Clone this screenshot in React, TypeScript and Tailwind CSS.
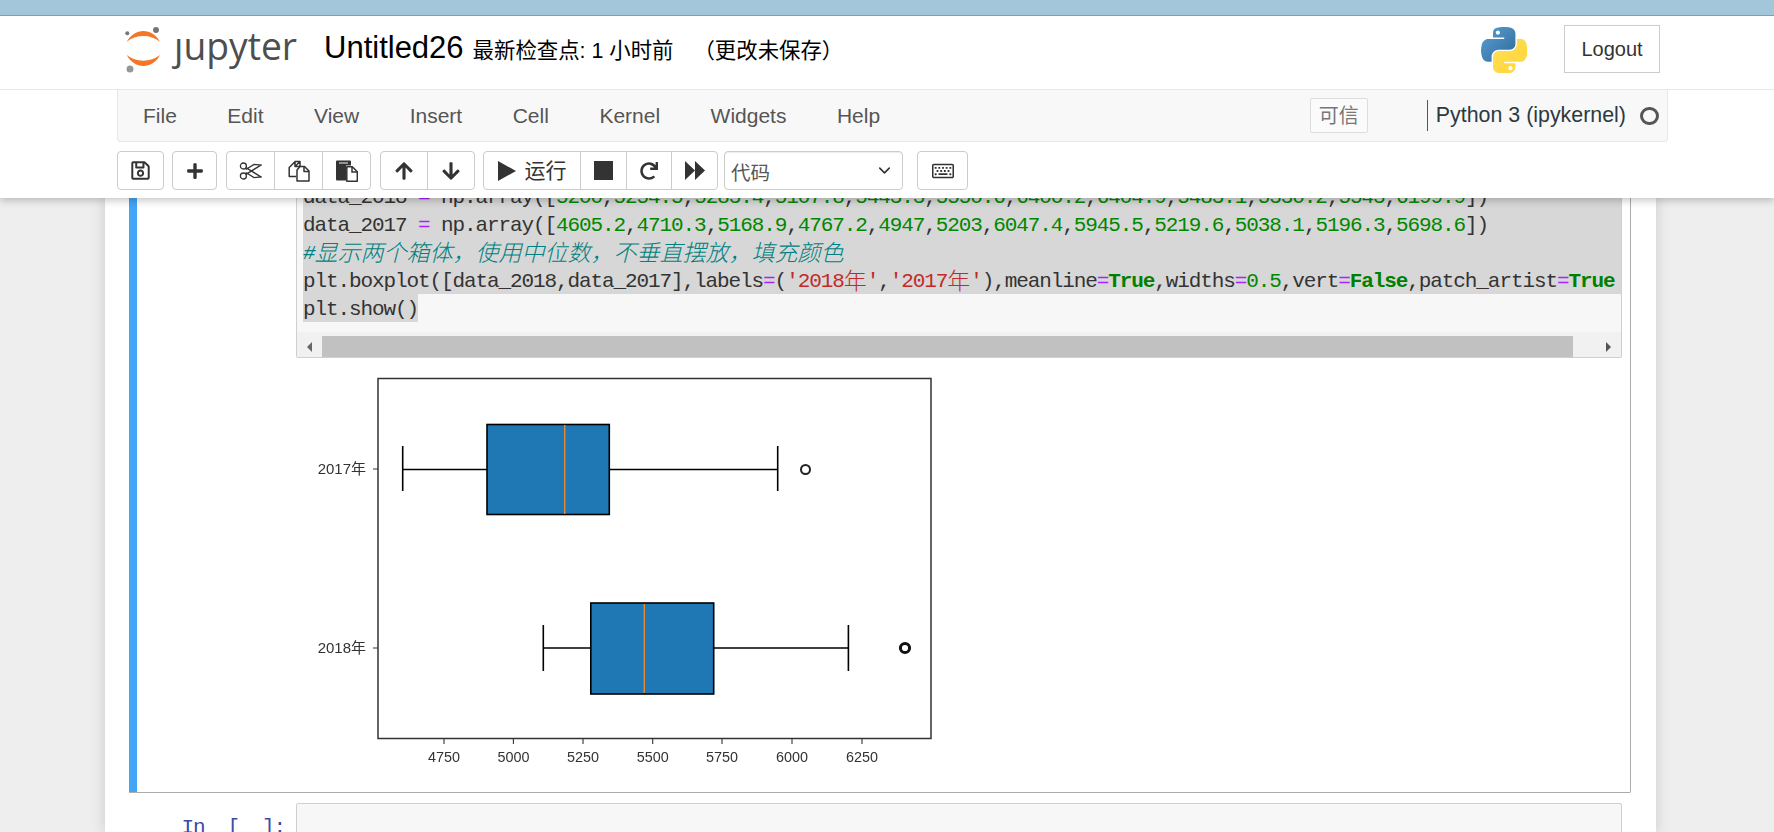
import React from "react";
import { FaRegSave, FaPlus, FaArrowUp, FaArrowDown, FaRedo, FaRegKeyboard } from "react-icons/fa";
import { LuChevronDown } from "react-icons/lu";

const Cjk = ({ children }: { children: React.ReactNode }) => (
  <span className="[font-family:'Noto_Sans_CJK_SC',sans-serif] text-[23px] leading-[0] align-[-2px] tracking-normal font-light">{children}</span>
);
const N = ({ children }: { children: React.ReactNode }) => <span className="text-[#008800]">{children}</span>;
const O = () => <span className="text-[#aa22ff]">=</span>;
const K = ({ children }: { children: React.ReactNode }) => <span className="text-[#008000] font-bold">{children}</span>;
const S = ({ children }: { children: React.ReactNode }) => <span className="text-[#c22a2a]">{children}</span>;

function Scissors() {
  return (
    <svg width="23" height="18" viewBox="0 0 23 18" fill="none" stroke="#333" strokeWidth="1.3">
      <circle cx="4.4" cy="4" r="3" />
      <circle cx="4.4" cy="14" r="3" />
      <path d="M7 5.6 22 15 15 15.6 6.8 10.5" />
      <path d="M7 12.4 22 3 15 2.4 6.8 7.5" />
    </svg>
  );
}
function CopyIcon() {
  return (
    <svg width="22" height="22" viewBox="0 0 22 22" fill="none" stroke="#333" strokeWidth="1.5" strokeLinejoin="round">
      <path d="M7 1.5h5v5H7zM12 1.5 7 6.5M7.2 1.5 1.2 7.5v9h7" />
      <path d="M12 6.5h4.5l4.5 4.5v10H9V10z" />
      <path d="M16 6.5v5h5" />
    </svg>
  );
}
function PasteIcon() {
  return (
    <svg width="22" height="22" viewBox="0 0 22 22">
      <path d="M1 0.5h13a1 1 0 0 1 1 1v4h-5v15H1a1 1 0 0 1-1-1v-18a1 1 0 0 1 1-1z" fill="#333" />
      <path d="M3 3h9" stroke="#f4f4f4" strokeWidth="1" />
      <path d="M10.8 6.7h5.5l5 5v9.5h-10.5z" fill="#fff" stroke="#333" strokeWidth="1.5" strokeLinejoin="round" />
      <path d="M16 6.7v5.3h5.2" fill="none" stroke="#333" strokeWidth="1.5" />
    </svg>
  );
}
function PlayIcon() {
  return (
    <svg width="18" height="20" viewBox="0 0 18 20"><path d="M0 0 18 10 0 20z" fill="#333" /></svg>
  );
}
function ForwardIcon() {
  return (
    <svg width="20" height="19" viewBox="0 0 20 19"><path d="M0 0 10 9.5 0 19zM10 0 20 9.5 10 19z" fill="#333" /></svg>
  );
}
function PythonLogo() {
  return (
    <svg width="46" height="46" viewBox="0 0 110 110" className="mt-[2px]">
      <defs>
        <linearGradient id="pyBlue" x1="0" y1="0" x2="1" y2="1">
          <stop offset="0" stopColor="#5a9fd4" />
          <stop offset="1" stopColor="#306998" />
        </linearGradient>
        <linearGradient id="pyYellow" x1="0" y1="0" x2="1" y2="1">
          <stop offset="0" stopColor="#ffe052" />
          <stop offset="1" stopColor="#ffd43b" />
        </linearGradient>
      </defs>
      <path fill="url(#pyBlue)" d="M54.919 0.001c-4.584.022-8.961.413-12.813 1.095C30.76 3.099 28.7 7.295 28.7 15.032v10.219h26.813v3.406H28.7h-10.063c-7.792 0-14.616 4.684-16.75 13.594-2.462 10.213-2.571 16.586 0 27.25 1.906 7.938 6.458 13.594 14.25 13.594h9.219v-12.25c0-8.85 7.657-16.656 16.75-16.656h26.781c7.455 0 13.406-6.138 13.406-13.625V15.032c0-7.266-6.13-12.725-13.406-13.937C64.282.328 59.502-.02 54.919.001zM40.419 8.22c2.77 0 5.031 2.299 5.031 5.125 0 2.816-2.262 5.094-5.031 5.094-2.78 0-5.031-2.277-5.031-5.094 0-2.826 2.251-5.125 5.031-5.125z" />
      <path fill="url(#pyYellow)" d="M85.638 28.657v11.906c0 9.231-7.826 17-16.75 17H42.106c-7.336 0-13.406 6.278-13.406 13.625v25.531c0 7.266 6.319 11.54 13.406 13.625 8.487 2.496 16.626 2.947 26.781 0 6.75-1.954 13.406-5.888 13.406-13.625V86.501H55.513v-3.406h40.188c7.792 0 10.696-5.435 13.406-13.594 2.799-8.399 2.68-16.476 0-27.25-1.926-7.757-5.604-13.594-13.406-13.594h-10.063zM70.575 93.313c2.78 0 5.031 2.277 5.031 5.094 0 2.826-2.251 5.125-5.031 5.125-2.77 0-5.031-2.299-5.031-5.125 0-2.816 2.261-5.094 5.031-5.094z" />
    </svg>
  );
}
function JupyterLogo() {
  return (
    <svg width="180" height="50" viewBox="120 25 180 50" className="shrink-0">
      <path d="M126.7 41.7C131 34.5 137 31 143.3 31 150 31 156 34.5 160 41.7 155 37.8 149.5 36 143.3 36 137 36 131.5 37.8 126.7 41.7z" fill="#f37726" />
      <path d="M126.7 55C131 62.5 137 66 143.3 66 150 66 156 62.5 160 55 155 59 149.5 60.7 143.3 60.7 137 60.7 131.5 59 126.7 55z" fill="#f37726" />
      <circle cx="156" cy="30" r="3" fill="#767677" />
      <circle cx="127.3" cy="33.3" r="2" fill="#767677" />
      <circle cx="130" cy="69" r="3.5" fill="#989798" />
      <text x="174" y="60" fontSize="39" textLength="123" lengthAdjust="spacingAndGlyphs" fill="#4e4e4e" className="[font-family:'Open_Sans',sans-serif]">jupyter</text>
      <rect x="172" y="25" width="12" height="13" fill="#fff" />
    </svg>
  );
}

function Btn({ w, children, last }: { w: string; children: React.ReactNode; last?: boolean }) {
  return <div className={`${w} h-full flex items-center justify-center text-[#333] ${last ? "" : "border-r border-[#cccccc]"}`}>{children}</div>;
}
function Group({ children }: { children: React.ReactNode }) {
  return <div className="flex h-[39px] rounded-[4px] border border-[#cccccc] bg-white overflow-hidden">{children}</div>;
}

function Boxplot() {
  const labelCls = "[font-family:'Liberation_Sans','Noto_Sans_CJK_SC',sans-serif]";
  const ticks: [number, string][] = [[444, "4750"], [513.4, "5000"], [583, "5250"], [652.7, "5500"], [722, "5750"], [792, "6000"], [862, "6250"]];
  return (
    <svg width="660" height="400" viewBox="300 370 660 400" className="blur-[0.4px]">
      <rect x="378" y="378.5" width="553" height="360" fill="#fff" stroke="#333" strokeWidth="1.5" />
      {ticks.map(([x, t]) => (
        <g key={t}>
          <line x1={x} x2={x} y1="739" y2="744" stroke="#333" strokeWidth="1.1" />
          <text x={x} y="762" textAnchor="middle" fontSize="15" fill="#333" textLength="32" lengthAdjust="spacingAndGlyphs" className={labelCls}>{t}</text>
        </g>
      ))}
      <line x1="373" x2="378" y1="469" y2="469" stroke="#333" />
      <line x1="373" x2="378" y1="648" y2="648" stroke="#333" />
      <text x="366" y="474" textAnchor="end" fontSize="15" fill="#333" className={labelCls}>2017年</text>
      <text x="366" y="653" textAnchor="end" fontSize="15" fill="#333" className={labelCls}>2018年</text>

      <g stroke="#000" strokeWidth="1.6" fill="none">
        <path d="M402.7 446V491M402.7 469.5H487M609.3 469.5H777.7M777.7 446V491" />
        <rect x="487" y="424.5" width="122.3" height="90" fill="#1f77b4" />
        <path d="M543.3 625V671M543.3 648H590.8M713.7 648H848.4M848.4 625V671" />
        <rect x="590.8" y="603" width="122.9" height="91" fill="#1f77b4" />
      </g>
      <line x1="564.7" x2="564.7" y1="425" y2="514" stroke="#e08a35" strokeWidth="1.5" />
      <line x1="644.3" x2="644.3" y1="604" y2="693" stroke="#e08a35" strokeWidth="1.5" />
      <circle cx="805.5" cy="469.5" r="4.5" fill="none" stroke="#222" strokeWidth="2" />
      <circle cx="905" cy="648" r="4.6" fill="none" stroke="#111" strokeWidth="3" />
    </svg>
  );
}

export default function App() {
  const menu = ["File", "Edit", "View", "Insert", "Cell", "Kernel", "Widgets", "Help"];
  const lineCls = "h-[28px] pt-[4px] leading-[24px] whitespace-pre";
  return (
    <div className="h-[832px] w-[1774px] overflow-hidden bg-[#eeeeee] flex flex-col [font-family:'Liberation_Sans','Noto_Sans_CJK_SC',sans-serif]">
      <div className="relative z-10 shrink-0 bg-white shadow-[0_2px_8px_rgba(0,0,0,0.25)]">
        <div className="h-[15px] bg-[#a3c6da]" />
        <div className="h-[1px] bg-[#7f9fb3]" />
        {/* header row */}
        <div className="h-[74px] flex items-start border-b border-[#e7e7e7] pl-[120px] pr-[114px]">
          <div className="pt-[9px]"><JupyterLogo /></div>
          <div className="ml-[24px] flex items-baseline pt-[14px] text-black">
            <span className="text-[31px] leading-[36px]">Untitled26</span>
            <span className="ml-[9px] text-[21.4px] leading-[36px]">最新检查点: 1 小时前</span>
            <span className="ml-[20px] text-[21.4px] leading-[36px]">（更改未保存）</span>
          </div>
          <div className="ml-auto flex items-start gap-[37px] pt-[9px]">
            <PythonLogo />
            <div className="w-[96px] h-[48px] border border-[#cccccc] flex items-center justify-center text-[20px] text-[#333]">Logout</div>
          </div>
        </div>
        {/* menubar */}
        <div className="ml-[117px] w-[1551px] h-[52px] bg-[#f8f8f8] border border-t-0 border-[#e7e7e7] rounded-b-[4px] flex items-center pl-[25px] pr-[8px]">
          <div className="flex gap-[50.5px] text-[21px] text-[#555555]">
            {menu.map((m) => <span key={m}>{m}</span>)}
          </div>
          <div className="ml-auto flex items-center">
            <div className="w-[58px] h-[35px] border border-[#dddddd] bg-[#fbfbfb] rounded-[2px] flex items-center justify-center text-[20px] text-[#777777]">可信</div>
            <div className="ml-[59px] w-px h-[31px] bg-[#555555]" />
            <span className="ml-[8px] text-[21.4px] text-[#2b3a42]">Python 3 (ipykernel)</span>
            <div className="ml-[14px] w-[19px] h-[18px] rounded-full border-[3px] border-[#555555]" />
          </div>
        </div>
        {/* toolbar */}
        <div className="pl-[117px] pt-[9px] pb-[8px] flex items-start">
          <Group><Btn w="w-[45px]" last><FaRegSave size={21} /></Btn></Group>
          <div className="ml-[8px]"><Group><Btn w="w-[43px]" last><FaPlus size={18} /></Btn></Group></div>
          <div className="ml-[9px]">
            <Group>
              <Btn w="w-[48px]"><Scissors /></Btn>
              <Btn w="w-[48px]"><CopyIcon /></Btn>
              <Btn w="w-[47px]" last><PasteIcon /></Btn>
            </Group>
          </div>
          <div className="ml-[9px]">
            <Group>
              <Btn w="w-[47px]"><FaArrowUp size={20} /></Btn>
              <Btn w="w-[46px]" last><FaArrowDown size={20} /></Btn>
            </Group>
          </div>
          <div className="ml-[8px]">
            <Group>
              <Btn w="w-[97px]">
                <span className="flex items-center gap-[9px]"><PlayIcon /><span className="text-[21px] text-[#333]">运行</span></span>
              </Btn>
              <Btn w="w-[46px]"><div className="w-[19px] h-[19px] bg-[#333]" /></Btn>
              <Btn w="w-[45px]"><FaRedo size={18} /></Btn>
              <Btn w="w-[45px]" last><ForwardIcon /></Btn>
            </Group>
          </div>
          <div className="ml-[6px] w-[179px] h-[39px] rounded-[4px] border border-[#cccccc] bg-white flex items-center pl-[6px] pr-[8px] justify-between text-[19.5px] text-[#555555] shadow-[inset_0_1px_1px_rgba(0,0,0,0.075)]">
            <span className="pt-[6px]">代码</span>
            <LuChevronDown size={19} className="text-[#333]" />
          </div>
          <div className="ml-[14px]"><Group><Btn w="w-[49px]" last><FaRegKeyboard size={22} /></Btn></Group></div>
        </div>
      </div>

      {/* notebook */}
      <div className="flex-1 min-h-0 overflow-hidden">
        <div className="ml-[105px] w-[1551px] h-full bg-white shadow-[0_0_12px_1px_rgba(87,87,87,0.2)]">
          <div className="ml-[24px] w-[1502px] flex border-r border-b border-[#ababab] rounded-br-[2px]">
            <div className="w-[8px] shrink-0 bg-[#42a5f5]" />
            <div className="flex-1 min-w-0 pl-[159px] pr-[8px] pb-[22px]">
              <div className="border border-t-0 border-[#cfcfcf] rounded-b-[2px] bg-[#f7f7f7] [font-family:'Liberation_Mono',monospace] text-[21px] tracking-[-1.1px] text-[#333]">
                <div className="pl-[6px] overflow-hidden">
                  <div className={`${lineCls} bg-[#d7d7d7] -mt-[16px]`}>data_2018 <O /> np.array([<N>5200</N>,<N>5254.5</N>,<N>5283.4</N>,<N>5107.8</N>,<N>5443.3</N>,<N>5550.6</N>,<N>6400.2</N>,<N>6404.9</N>,<N>5483.1</N>,<N>5330.2</N>,<N>5543</N>,<N>6199.9</N>])</div>
                  <div className={`${lineCls} bg-[#d7d7d7]`}>data_2017 <O /> np.array([<N>4605.2</N>,<N>4710.3</N>,<N>5168.9</N>,<N>4767.2</N>,<N>4947</N>,<N>5203</N>,<N>6047.4</N>,<N>5945.5</N>,<N>5219.6</N>,<N>5038.1</N>,<N>5196.3</N>,<N>5698.6</N>])</div>
                  <div className={`${lineCls} bg-[#d7d7d7] italic text-[#008080]`}>#<Cjk>显示两个箱体，使用中位数，不垂直摆放，填充颜色</Cjk></div>
                  <div className={`${lineCls} bg-[#d7d7d7]`}>plt.boxplot([data_2018,data_2017],labels<O />(<S>'2018<Cjk>年</Cjk>'</S>,<S>'2017<Cjk>年</Cjk>'</S>),meanline<O /><K>True</K>,widths<O /><N>0.5</N>,vert<O /><K>False</K>,patch_artist<O /><K>True</K></div>
                  <div className="h-[28px]"><div className="w-[115px] h-[28px] pt-[4px] leading-[24px] whitespace-pre bg-[#d7d7d7]">plt.show()</div></div>
                </div>
                <div className="mt-[10px] h-[25px] bg-[#f1f1f1] flex items-end">
                  <div className="w-[25px] h-[21px] flex items-center justify-center"><div className="w-0 h-0 border-y-[5px] border-y-transparent border-r-[5px] border-r-[#666]" /></div>
                  <div className="w-[1251px] h-[21px] bg-[#c1c1c1]" />
                  <div className="flex-1 h-[21px] flex items-center justify-end pr-[10px]"><div className="w-0 h-0 border-y-[5px] border-y-transparent border-l-[5px] border-l-[#555]" /></div>
                </div>
              </div>
              <div className="mt-[12px] ml-[4px]"><Boxplot /></div>
            </div>
          </div>
          <div className="ml-[24px] mt-[10px] flex w-[1493px]">
            <div className="w-[167px] shrink-0 pt-[13px] pr-[11px] text-right text-[21px] tracking-[-1.1px] leading-[24px] whitespace-pre text-[#3a4aa8] [font-family:'Liberation_Mono',monospace]">{"In\u00a0\u00a0[\u00a0\u00a0]:"}</div>
            <div className="flex-1 h-[60px] border border-[#cfcfcf] rounded-[2px] bg-[#f7f7f7]" />
          </div>
        </div>
      </div>
    </div>
  );
}
